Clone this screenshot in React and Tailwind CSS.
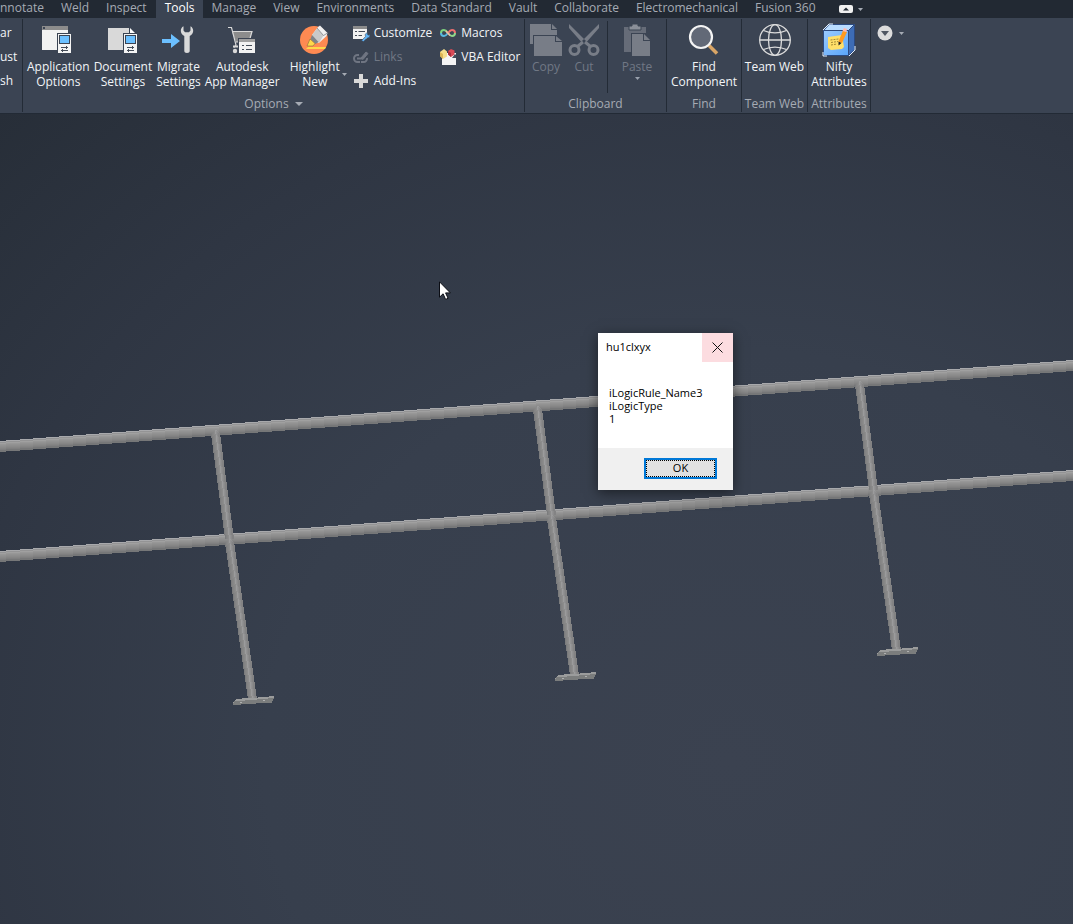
import clsx from 'clsx'

const tabs = [
  'nnotate', 'Weld', 'Inspect', 'Tools', 'Manage', 'View', 'Environments', 'Data Standard',
  'Vault', 'Collaborate', 'Electromechanical', 'Fusion 360',
]

function Caret({ className = 'w-[5px] h-[3px]' }) {
  return (
    <svg viewBox="0 0 8 4" preserveAspectRatio="none" className={clsx('shrink-0', className)}>
      <path d="M0 0h8L4 4z" fill="currentColor" />
    </svg>
  )
}

/* ---------- Large icons, 32x32 ---------- */

function Sheet({ x, y }) {
  return (
    <g transform={`translate(${x} ${y})`}>
      <path d="M-1-1h15v21H-1z" fill="#3b4453" />
      <path d="M0 0h13v19H0z" fill="#f4f4f4" />
      <path d="M1 1h11v9H1z" fill="#3b4453" />
      <path d="M2 2h9v7H2z" fill="#6cc0ff" />
      <path d="M3 13.500h7M3 16.500h7M8.500 12v3M4.500 15v3" stroke="#444c58" />
    </g>
  )
}

function AppOptionsIcon() {
  return (
    <>
      <path d="M0 2h26v24H0z" fill="#f2f2f2" />
      <path d="M0 2h26v4H0z" fill="#8c8c8c" />
      <path d="M1 3h2v2H1z" fill="#3b4453" />
      <Sheet x={16} y={10} />
    </>
  )
}

function DocSettingsIcon() {
  return (
    <>
      <path d="M1 4h21v5h5v17H1z" fill="#d9d9d9" />
      <path d="M23 4l5 5h-5z" fill="#fff" />
      <Sheet x={17} y={10} />
    </>
  )
}

function MigrateIcon() {
  return (
    <>
      <path d="M0 15h9v-5l9 7-9 7v-5H0z" fill="#6cc0ff" />
      <path
        d="M21.500 2.200c-1.800 1-2.700 2.600-2.700 4.600 0 2.300 1.200 4 3.500 5.200V27c0 1.200 1 2 2.700 2s2.700-.8 2.700-2V12c2.300-1.200 3.500-2.900 3.500-5.200 0-2-.9-3.600-2.700-4.600v4.300L27 8.200h-4l-1.500-1.700z"
        fill="#d9d9d9"
      />
    </>
  )
}

function CartIcon() {
  return (
    <>
      <path d="M6 8h20l-3 10H10z" fill="#8c8c8c" />
      <path d="M2 3.500h3.500L10 21l-2 2.500M6.500 7.500H26L23 18H10" fill="none" stroke="#d9d9d9" strokeWidth="1.200" />
      <path d="M7 22.500h10" stroke="#d9d9d9" strokeWidth="2" />
      <circle cx="9" cy="27" r="2.200" fill="#d9d9d9" />
      <path d="M12 14h18v16H12z" fill="#3b4453" />
      <path d="M13 15h16v14H13z" fill="#f2f2f2" />
      <path d="M13 15h16v3H13z" fill="#a0a0a0" />
      <path d="M16 21.500h2M20 21.500h6M16 25.500h2M20 25.500h6" stroke="#444c58" />
    </>
  )
}

function HighlightIcon() {
  return (
    <>
      <circle cx="15" cy="16" r="14" fill="#ff8a52" />
      <path d="M9 23h18l-1 2H7z" fill="#ffd84a" />
      <path d="M13 11l6-8 2-1.500 7.500 7.500-1 3-7 6.500-2 .5z" fill="#f0f0f0" />
      <path d="M13 11l5-6.500 6.500 7-4 6.500-3 1z" fill="#c9c9c9" />
      <path d="M13 11l6.500 7-3 2-5-5z" fill="#808488" />
      <path d="M11 15l5 4.500-2 2.500H8z" fill="#ffd84a" stroke="#8a6f3a" strokeWidth=".6" />
      <path d="M18 4l6.500 7.500 4-2.500" fill="none" stroke="#6f7276" strokeWidth=".7" />
    </>
  )
}

function CopyIcon() {
  return (
    <>
      <path d="M0 0h21v6h6v14H0z" fill="#787d87" />
      <path d="M22 0l5 5h-5z" fill="#787d87" />
      <path d="M3 11h29v22H3z" fill="#3b4453" />
      <path d="M4 12h21v6h7v14H4z" fill="#787d87" />
      <path d="M26 12l6 5h-6z" fill="#787d87" />
    </>
  )
}

function CutIcon() {
  return (
    <g fill="#787d87">
      <path d="M1 0v4l15 17 3-3zM31 0v4L16 21l-3-3z" />
      <g fill="none" stroke="#787d87" strokeWidth="3">
        <circle cx="6.500" cy="26" r="4.500" />
        <circle cx="25.500" cy="26" r="4.500" />
        <path d="M9.500 22.500L15 18M22.500 22.500L17 18" />
      </g>
    </g>
  )
}

function PasteIcon() {
  return (
    <>
      <path d="M3 3h22v25H3z" fill="#666c78" />
      <path d="M8 2h3V0h6v2h3v4H8z" fill="#8a8f98" stroke="#3b4453" />
      <path d="M10 9h20v24H10z" fill="#3b4453" />
      <path d="M11 10h11v7h7v15H11z" fill="#787d87" />
      <path d="M23 10l6 6h-6z" fill="#787d87" />
    </>
  )
}

function FindIcon() {
  return (
    <>
      <path d="M21 21.500l8 8" stroke="#d9a566" strokeWidth="3.500" />
      <circle cx="13" cy="13" r="11" fill="#626977" stroke="#f4f4f4" strokeWidth="2.200" />
    </>
  )
}

function GlobeIcon() {
  return (
    <g fill="none" stroke="#dcdcdc" strokeWidth="1.300">
      <circle cx="16" cy="16" r="15.300" />
      <ellipse cx="16" cy="16" rx="6.500" ry="15.300" />
      <path d="M.7 16h30.600M4.500 6.500c7 3 16 3 23 0M4.500 25.500c7-3 16-3 23 0" />
    </g>
  )
}

function NiftyIcon() {
  return (
    <>
      <defs>
        <linearGradient id="cube" x1="0" y1="0" x2="1" y2="1">
          <stop offset="0" stopColor="#9cccff" />
          <stop offset="1" stopColor="#57a4fa" />
        </linearGradient>
      </defs>
      <path d="M0 6l6-6h26l-6 6z" fill="#b9dcff" />
      <path d="M26 6l6-6v26l-6 6z" fill="#3d6cb5" />
      <path d="M0 6h26v26H0z" fill="url(#cube)" />
      <path d="M.5 31.500v-25h25v25zM.5 6.500L6 .5h25.500l-6 6M31.500.5V26l-6 5.500" fill="none" stroke="#2c4a80" />
      <path d="M0 6l6-6h4M26 32l6-6v-4M0 28v4h4" fill="none" stroke="#e6f2ff" />
      <path d="M5 13l14-2 2 12-2 2-11 1-3-2z" fill="#ffe06a" />
      <path d="M7.500 16l8-1M8 18.500l7-1M8 21l6-1" stroke="#a58a35" strokeDasharray="2 1" />
      <path d="M20 6.500l4 1.500-5 11-3.500-1.500z" fill="#ff9a1f" />
      <path d="M19.500 7l1.500-3 3 1-.5 3z" fill="#ffb9b0" />
      <path d="M15.500 17.500l3 1.500-3 2.500z" fill="#222" />
    </>
  )
}

function LargeButton({ icon: Icon, lines, disabled, caret }) {
  return (
    <button
      type="button"
      disabled={disabled}
      className={clsx(
        'flex flex-col items-center px-[2px] pt-[3px] leading-[15px] whitespace-nowrap',
        disabled ? 'text-[#717885]' : 'text-[#f2f4f7]',
      )}
    >
      <svg width="32" height="32" viewBox="0 0 32 32" className="mb-[3px] overflow-visible">
        <Icon />
      </svg>
      {lines.map((line) => (
        <span key={line}>{line}</span>
      ))}
      {caret && <Caret className="mt-[3px] h-[3px] w-[5px] text-[#9aa2ae]" />}
    </button>
  )
}

/* ---------- Small icons, 16x16 ---------- */

function CustomizeIcon() {
  return (
    <>
      <path d="M0 1h14v13H0z" fill="#f2f2f2" />
      <path d="M0 1h14v3H0z" fill="#8c8c8c" />
      <path d="M2 6.500h2M5.500 6.500H12M2 10.500h2M5.500 10.500H9" stroke="#444c58" />
      <path d="M8.500 15.500l4-4-.5-2 2.500-2.300v2.300l1.500.7 1-1-.5 3-2.500 1-3.500 3.300z" fill="#5fb2f5" stroke="#3b4453" strokeWidth=".5" />
    </>
  )
}

function LinksIcon() {
  return (
    <g fill="none" stroke="#6f7582">
      <path d="M6 6H4.500a3.500 3.500 0 000 7H7M4 9.500h5M8 13h2.500a3.500 3.500 0 003.500-4" strokeWidth="2" />
      <path d="M8 9l5-6 2 1.500-5 6z" fill="#6f7582" />
    </g>
  )
}

function AddIcon() {
  return <path d="M6 1h4v5h5v4h-5v5H6v-5H1V6h5z" fill="#d9d9d9" />
}

function MacrosIcon() {
  return (
    <g fill="none" strokeWidth="2">
      <path d="M8 8C6.500 6 5.500 5 4 5a3 3 0 00-3 3" stroke="#7fd37f" />
      <path d="M1 8a3 3 0 003 3c1.500 0 2.500-1 4-3" stroke="#58b8e0" />
      <path d="M8 8c1.500-2 2.500-3 4-3a3 3 0 013 3" stroke="#f07070" />
      <path d="M15 8a3 3 0 01-3 3c-1.500 0-2.500-1-4-3" stroke="#8fd88a" />
      <path d="M6 6l4 4.500" stroke="#f2b5a0" strokeWidth="1.500" />
    </g>
  )
}

function VbaIcon() {
  return (
    <>
      <path d="M2 4h14v12H2z" fill="#f4f4f4" />
      <path d="M0 3l4-3 3 2.500v5L3 10 0 7z" fill="#f5dd8c" />
      <path d="M0 3l3 2v5L0 7z" fill="#dcb656" />
      <path d="M8 2l3-2 3.500 1.500v4L11 8 8 5.500z" fill="#d94a55" />
      <path d="M8 2l3 2v4L8 5.500z" fill="#a82f3c" />
      <path d="M12 9l3-4 1 1v3z" fill="#444c58" />
    </>
  )
}

function SmallButton({ icon: Icon, label, disabled }) {
  return (
    <button
      type="button"
      disabled={disabled}
      className={clsx(
        'flex h-6 items-center gap-[5px] whitespace-nowrap',
        disabled ? 'text-[#717885]' : 'text-[#f2f4f7]',
      )}
    >
      <svg width="16" height="16" viewBox="0 0 16 16" className="overflow-visible">
        <Icon />
      </svg>
      {label}
    </button>
  )
}

function Panel({ title, children, className, caret }) {
  return (
    <section className={clsx('my-px flex shrink-0 flex-col border-r border-[#232b36] pt-[2px]', className)}>
      <div className="flex h-[72px] justify-center">{children}</div>
      <div className="mt-[3px] flex h-4 items-center justify-center gap-[6px] leading-4 whitespace-nowrap text-[#a6abb4]">
        {title}
        {caret && <Caret className="h-1 w-2" />}
      </div>
    </section>
  )
}

function Ribbon() {
  return (
    <header className="relative border-b border-[#222a35] bg-[#3b4453] text-[12px]">
      <nav role="tablist" className="flex h-[18px] overflow-hidden bg-[#222933]">
        {tabs.map((tab, i) => (
          <button
            key={tab}
            type="button"
            role="tab"
            aria-selected={tab === 'Tools'}
            className={clsx(
              'shrink-0 pb-[2px] leading-4 whitespace-nowrap',
              i === 0 && 'pr-[9px]',
              i > 0 && tab !== 'Tools' && 'pr-[9px] pl-2',
              tab === 'Tools' ? 'bg-[#3b4453] px-[9px] text-white' : 'text-[#a6abb4]',
            )}
          >
            {tab}
          </button>
        ))}
        <button type="button" aria-label="Minimize ribbon" className="ml-[14px] flex items-center gap-[5px] text-[#a6abb4]">
          <svg width="14" height="8" viewBox="0 0 14 8">
            <rect width="14" height="8" rx="2" fill="#f0f0f0" />
            <path d="M4 5.500L7 2.500l3 3z" fill="#222933" />
          </svg>
          <Caret />
        </button>
      </nav>

      <div className="flex h-[95px] overflow-hidden">
        <Panel className="w-[23px]">
          <div className="flex w-full flex-col text-[#f2f4f7]">
            {['ar', 'ust', 'sh'].map((text) => (
              <button key={text} type="button" className="h-6 text-left">{text}</button>
            ))}
          </div>
        </Panel>

        <Panel title="Options" caret className="w-[502px]">
          <div className="flex w-full pl-[2px]">
            <LargeButton icon={AppOptionsIcon} lines={['Application', 'Options']} />
            <LargeButton icon={DocSettingsIcon} lines={['Document', 'Settings']} />
            <LargeButton icon={MigrateIcon} lines={['Migrate', 'Settings']} />
            <LargeButton icon={CartIcon} lines={['Autodesk', 'App Manager']} />
            <div className="ml-[6px] flex items-start text-[#a6abb4]">
              <LargeButton icon={HighlightIcon} lines={['Highlight', 'New']} />
              <Caret className="mt-[52px] h-[3px] w-[5px]" />
            </div>
            <div className="ml-[6px] flex flex-col">
              <SmallButton icon={CustomizeIcon} label="Customize" />
              <SmallButton icon={LinksIcon} label="Links" disabled />
              <SmallButton icon={AddIcon} label="Add-Ins" />
            </div>
            <div className="ml-2 flex flex-col">
              <SmallButton icon={MacrosIcon} label="Macros" />
              <SmallButton icon={VbaIcon} label="VBA Editor" />
            </div>
          </div>
        </Panel>

        <Panel title="Clipboard" className="w-[142px]">
          <div className="flex w-full gap-[2px] pl-[3px]">
            <LargeButton icon={CopyIcon} lines={['Copy']} disabled />
            <LargeButton icon={CutIcon} lines={['Cut']} disabled />
            <div className="mr-[9px] ml-[3px] border-r border-[#232b36]" />
            <LargeButton icon={PasteIcon} lines={['Paste']} disabled caret />
          </div>
        </Panel>

        <Panel title="Find" className="w-[75px]">
          <LargeButton icon={FindIcon} lines={['Find', 'Component']} />
        </Panel>
        <Panel title="Team Web" className="w-[66px]">
          <LargeButton icon={GlobeIcon} lines={['Team Web']} />
        </Panel>
        <Panel title="Attributes" className="w-[63px]">
          <LargeButton icon={NiftyIcon} lines={['Nifty', 'Attributes']} />
        </Panel>

        <button type="button" aria-label="Ribbon options" className="ml-[6px] flex h-[30px] items-center gap-[6px] text-[#a6abb4]">
          <svg width="16" height="16" viewBox="0 0 16 16">
            <circle cx="8" cy="8" r="7.500" fill="#dcdcdc" />
            <path d="M4 6h8l-4 5z" fill="#505762" />
          </svg>
          <Caret />
        </button>
      </div>
    </header>
  )
}

/* ---------- 3D view ---------- */

// shades across a tube, from the lit edge to the shadow edge
const railShades = ['#a8a9ac', '#949495', '#a0a0a0', '#979797', '#929292', '#8e8e8e', '#8a8a8a', '#858585', '#7f7f80', '#767778']
const postShades = ['#7b7c7d', '#838384', '#878787', '#8c8c8c', '#9b9b9c', '#929293', '#8b8b8c', '#838384']

const rails = [
  { left: 328, right: 247 },
  { left: 438, right: 357 },
]

const posts = [
  { top: [216, 316], cross: [230, 425], foot: [253, 585] },
  { top: [538, 292], cross: [552, 401], foot: [575, 561] },
  { top: [860, 267], cross: [874, 376], foot: [897, 536] },
]

function Tube({ from, to }) {
  return postShades.map((shade, i) => {
    const dx = i - 4
    return (
      <line
        key={i}
        x1={from[0] + dx}
        y1={from[1] + Math.abs(dx)}
        x2={to[0] + dx}
        y2={to[1]}
        stroke={shade}
        strokeWidth="2"
      />
    )
  })
}

function Railing() {
  return (
    <svg width="1073" height="810" viewBox="0 0 1073 810" shapeRendering="crispEdges" className="block">
      {rails.map((rail) =>
        railShades.map((shade, i) => (
          <line
            key={`${rail.left}-${i}`}
            x1="0"
            y1={rail.left + i}
            x2="1073"
            y2={rail.right + i}
            stroke={shade}
            strokeWidth="2"
          />
        )),
      )}
      {posts.map(({ top, cross, foot }) => (
        <g key={top[0]}>
          <Tube from={top} to={cross} />
          <Tube from={cross} to={foot} />
          <g transform={`translate(${foot[0]} ${foot[1]})`}>
            <path d="M-17 0L-5-1 5-1.500 21-3 21-1-20 4z" fill="#9b9c9c" />
            <path d="M-19 2.500L21-1 19 3.500-20 6z" fill="#7b7d7d" />
            <path d="M-13 3.500h2M10 1.500h2" stroke="#b0b1b1" />
          </g>
        </g>
      ))}
    </svg>
  )
}

function Cursor() {
  return (
    <svg width="12" height="19" viewBox="0 0 12 19" className="absolute top-[167px] left-[439px]">
      <path d="M.5.8v15.400l3.600-3.400 2.500 5.600 2.500-1.100-2.500-5.400h4.800z" fill="#fff" stroke="#0b0d14" />
    </svg>
  )
}

function MessageBox() {
  return (
    <div
      role="dialog"
      aria-label="hu1clxyx"
      className="absolute top-[219px] left-[598px] w-[135px] bg-white text-black shadow-[0_3px_12px_rgba(0,0,0,0.5)]"
    >
      <div className="flex h-[29px] items-center justify-between pl-2 text-[11px]">
        <span>hu1clxyx</span>
        <button type="button" aria-label="Close" className="flex h-full w-[31px] items-center justify-center bg-[#fcdce0]">
          <svg width="11" height="11" viewBox="0 0 11 11">
            <path d="M.5.5l10 10M10.500.5l-10 10" stroke="#111" />
          </svg>
        </button>
      </div>
      <div className="h-[86px] pt-6 pl-[11px] text-[11px] leading-[13px]">
        <p>iLogicRule_Name3</p>
        <p>iLogicType</p>
        <p>1</p>
      </div>
      <div className="flex h-[42px] items-start justify-end bg-[#f0f0f0] pt-[10px] pr-4">
        <button type="button" className="h-[21px] w-[73px] border-2 border-[#0078d7] bg-[#e1e1e1] text-[11px]">
          <span className="flex h-full items-center justify-center border border-dotted border-black">OK</span>
        </button>
      </div>
    </div>
  )
}

export default function App() {
  return (
    <div className="flex min-h-screen flex-col overflow-hidden bg-[#222933] font-['Open_Sans','Noto_Sans',sans-serif]">
      <Ribbon />
      <main className="relative flex-1 overflow-hidden bg-[radial-gradient(ellipse_at_68%_80%,#3b4250_0%,#373f4d_45%,#2f3643_75%,#272e38_100%)]">
        <Railing />
        <Cursor />
        <MessageBox />
      </main>
    </div>
  )
}
